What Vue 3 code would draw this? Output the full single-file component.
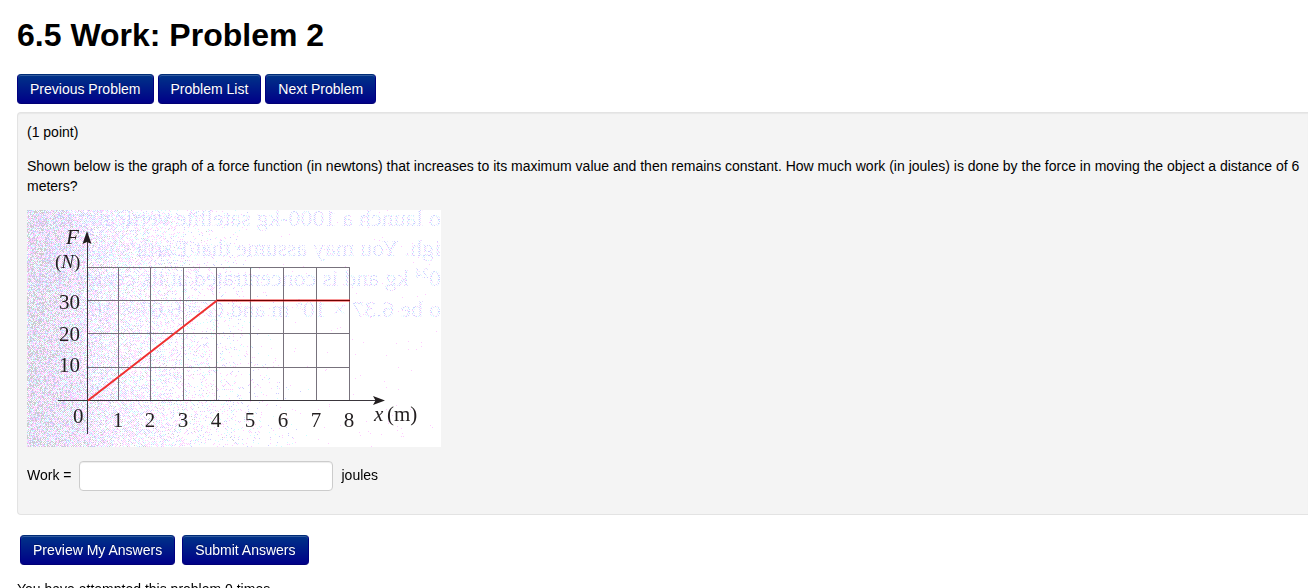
<script setup>
import { onMounted, ref } from 'vue'

const grain = ref(null)
const answer = ref('')

const columns = [91, 123, 156, 189, 223, 256, 289, 322]
const rows = [57, 90, 123, 157]
const yLabels = [{ t: '30', y: 99 }, { t: '20', y: 131 }, { t: '10', y: 162 }]

// Paper shade: heavy at the left edge, fading out across the graph.
onMounted(() => {
  const c = grain.value
  const ctx = c.getContext('2d')
  const img = ctx.createImageData(c.width, c.height)
  const white = [255, 255, 255]
  const tints = [[255, 204, 255], [204, 204, 255], [204, 255, 255], [204, 204, 204]]
  let seed = 12345
  const rnd = () => {
    seed = (seed + 0x6d2b79f5) | 0
    let t = Math.imul(seed ^ (seed >>> 15), 1 | seed)
    t = (t + Math.imul(t ^ (t >>> 7), 61 | t)) ^ t
    return ((t ^ (t >>> 14)) >>> 0) / 4294967296
  }
  for (let y = 0; y < c.height; y++) {
    for (let x = 0; x < c.width; x++) {
      const reach = 240 + (y / c.height) * 60
      const shade = Math.max(0, 1 - x / reach)
      const density = 0.003 + 0.8 * Math.pow(shade, 1.8)
      const threshold = ((x + y) % 2) * 0.4 + rnd() * 0.6
      const pick = rnd()
      const gray = 0.4 * Math.pow(shade, 3)
      let color = white
      if (threshold < density) {
        if (pick < gray) color = tints[3]
        else if (pick < gray + (1 - gray) * 0.5 || shade === 0) color = tints[0]
        else if (pick < gray + (1 - gray) * 0.75) color = tints[1]
        else color = tints[2]
      }
      img.data.set([...color, 255], (y * c.width + x) * 4)
    }
  }
  ctx.putImageData(img, 0, 0)
})
</script>

<template>
  <main class="page">
    <h1>6.5 Work: Problem 2</h1>
    <nav class="nav">
      <button type="button" class="btn">Previous Problem</button>
      <button type="button" class="btn">Problem List</button>
      <button type="button" class="btn">Next Problem</button>
    </nav>
    <form @submit.prevent>
      <section class="problem">
        <p>(1 point)</p>
        <p>
          Shown below is the graph of a force function (in newtons) that increases to its maximum value and then
          remains constant. How much work (in joules) is done by the force in moving the object a distance of 6
          meters?
        </p>
        <div class="figure">
          <canvas ref="grain" width="414" height="237"></canvas>
          <svg width="414" height="237" viewBox="0 0 414 237" role="img" aria-label="Force graph">
            <defs>
              <pattern id="speckle" width="5" height="4" patternUnits="userSpaceOnUse" shape-rendering="crispEdges">
                <path fill="#ccccff" d="M0 0h1v1h-1zM2 1h1v1h-1zM4 2h1v1h-1zM1 3h1v1h-1zM3 3h1v1h-1z" />
                <path fill="#ffccff" d="M3 0h1v1h-1zM0 2h1v1h-1z" />
                <path fill="#ccffff" d="M4 1h1v1h-1zM2 2h1v1h-1z" />
                <path fill="#ccccff" d="M1 1h1v1h-1z" />
              </pattern>
            </defs>
            <g class="bleed" transform="translate(414 0) scale(-1 1)">
              <text x="0" y="16">o launch a 1000-kg satellite vertically to a</text>
              <text x="0" y="46">igh. You may assume that Earth’s mass is</text>
              <text x="0" y="76">0<tspan class="sup" dy="-8">24</tspan><tspan dy="8"> kg and is concentrated at its center. Tak</tspan></text>
              <text x="0" y="107">o be 6.37 × 10<tspan class="sup" dy="-8">6</tspan><tspan dy="8"> m and G = 6.67 × 10</tspan></text>
            </g>
            <g class="grid">
              <path v-for="x in columns" :key="'c' + x" :d="`M${x} 57V190`" />
              <path v-for="y in rows" :key="'r' + y" :d="`M60 ${y}H323`" />
            </g>
            <g class="axis">
              <path d="M60 28V224M31 190H350" />
              <path class="tip" d="M60 21L64.500 34L60 32L55.500 34Z" />
              <path class="tip" d="M358 190.500L346 186L348.500 190.500L346 195Z" />
            </g>
            <path class="force" d="M61 190.500L190 90.500H323" />
            <path class="plateau" d="M190 90.500H323" />
            <g class="labels">
              <text class="it" x="39" y="34">F</text>
              <text class="unit" x="28" y="58">(<tspan class="it">N</tspan>)</text>
              <text v-for="l in yLabels" :key="l.t" x="53" :y="l.y" text-anchor="end">{{ l.t }}</text>
              <text x="46" y="213">0</text>
              <text v-for="(x, i) in columns" :key="i" :x="x" y="217" text-anchor="middle">{{ i + 1 }}</text>
              <text class="it" x="347" y="211">x</text>
              <text x="360" y="211">(m)</text>
            </g>
          </svg>
        </div>
        <div class="answer">
          <label for="work">Work =</label>
          <input id="work" v-model="answer" type="text" />
          <span>joules</span>
        </div>
      </section>
      <div class="actions">
        <button type="button" class="btn">Preview My Answers</button>
        <button type="submit" class="btn">Submit Answers</button>
      </div>
    </form>
    <p class="attempts">You have attempted this problem 0 times.</p>
  </main>
</template>

<style>
html,
body {
  background: #fff;
  overflow: hidden;
}
</style>

<style scoped>
.page {
  padding: 15px 0 0 17px;
  font: 14px/20px "Liberation Sans", Arial, sans-serif;
  color: #000;
}
h1 {
  margin: 0 0 19px;
  font-size: 32px;
  line-height: 40px;
}
p {
  margin: 0 0 14px;
}
.nav {
  display: flex;
  gap: 4px;
  margin-bottom: 8px;
}
.btn {
  height: 30px;
  padding: 0 12px;
  border: 1px solid #002a80;
  border-color: #002c77 #000080 #000074;
  border-radius: 4px;
  background: linear-gradient(#003388, #000088);
  box-shadow: inset 0 1px 0 rgba(255, 255, 255, 0.2);
  color: #fff;
  font: inherit;
  text-shadow: 0 -1px 0 rgba(0, 0, 0, 0.25);
}
.problem {
  padding: 9px 8px 23px 9px;
  border: 1px solid #e3e3e3;
  border-right: 0;
  border-radius: 4px 0 0 4px;
  background: #f4f4f4;
  box-shadow: inset 0 1px 1px rgba(0, 0, 0, 0.05);
}
.figure {
  display: grid;
  width: 414px;
  margin-bottom: 14px;
}
.figure > * {
  grid-area: 1 / 1;
}
.answer {
  display: flex;
  gap: 8px;
  line-height: 28px;
}
.answer input {
  box-sizing: border-box;
  width: 254px;
  height: 30px;
  padding: 4px 6px;
  border: 1px solid #ccc;
  border-radius: 4px;
  background: #fff;
  box-shadow: inset 0 1px 1px rgba(0, 0, 0, 0.075);
  font: inherit;
}
.actions {
  display: flex;
  gap: 7px;
  padding: 20px 3px 14px;
}
.bleed {
  fill: url(#speckle);
  font: 24px "Liberation Serif", "Times New Roman", serif;
}
.sup {
  font-size: 14px;
}
.grid {
  stroke: #77727c;
  stroke-width: 1;
  shape-rendering: crispEdges;
}
.axis {
  fill: none;
  stroke: #3a363c;
  shape-rendering: crispEdges;
}
.tip {
  fill: #231f20;
  stroke: none;
  shape-rendering: auto;
}
.force {
  fill: none;
  stroke: #f03030;
  stroke-width: 2;
}
.plateau {
  stroke: #700000;
}
.labels {
  fill: #231f20;
  font: 21px "Liberation Serif", "Times New Roman", serif;
}
.unit {
  font-size: 19px;
}
.it {
  font-style: italic;
}
</style>
